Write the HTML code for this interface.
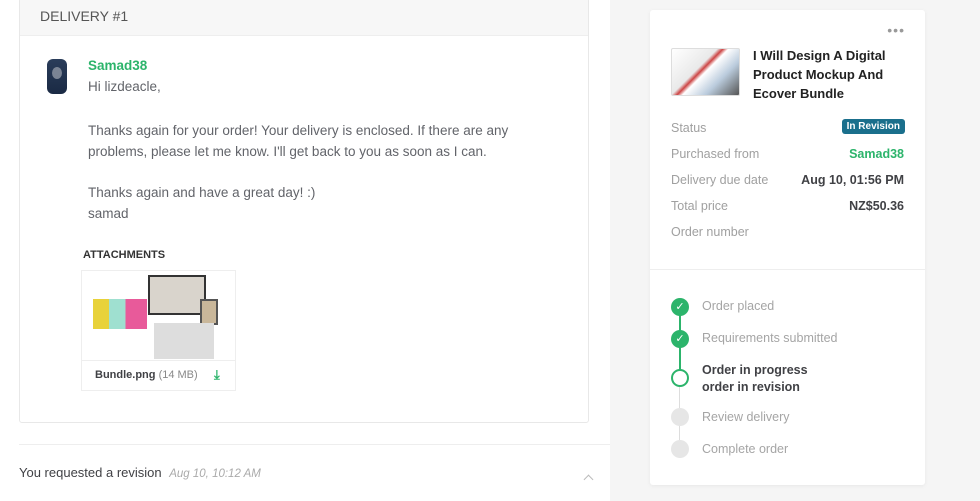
<!DOCTYPE html>
<html><head><meta charset="utf-8"><style>
*{margin:0;padding:0;box-sizing:border-box}
body{width:980px;height:501px;overflow:hidden;background:#f5f5f5;font-family:"Liberation Sans",Arial,sans-serif;position:relative}
.left{position:absolute;left:0;top:0;width:610px;height:501px;background:#fff}
.card{position:absolute;left:19px;top:-2px;width:570px;height:425px;border:1px solid #e8e8e8;border-radius:3px;background:#fff}
.hdr{height:37px;background:#f7f7f7;border-bottom:1px solid #eee;padding:9px 0 0 20px;font-size:14px;color:#555}
.t{position:absolute;font-size:13.5px;color:#62646a}
.right{position:absolute;left:650px;top:10px;width:275px;height:475px;background:#fff;border-radius:3px;box-shadow:0 1px 4px rgba(0,0,0,.06)}
.lbl{position:absolute;left:21px;font-size:12.5px;color:#a0a0a0}
.val{position:absolute;right:21px;font-size:12.5px;color:#404145;font-weight:bold}
.st{position:absolute;left:52px;font-size:12.5px;color:#a5a5a5}
.dot{position:absolute;left:21px;width:18px;height:18px;border-radius:50%}
.g{background:#1dbf73;background:#2cb46b}
.e{background:#e6e6e6}
</style></head><body>
<div class="left">
<div class="card"><div class="hdr">DELIVERY #1</div></div>
<div style="position:absolute;left:47px;top:59px;width:20px;height:35px;border-radius:6px;background:linear-gradient(#2a3d5a,#1a2a44)"><div style="margin:8px auto 0;width:10px;height:12px;border-radius:50%;background:#7a8494"></div></div>
<div class="t" style="left:88px;top:58px;color:#2cb46b;font-weight:bold">Samad38</div>
<div class="t" style="left:88px;top:79px">Hi lizdeacle,</div>
<div class="t" style="left:88px;top:120px;line-height:21px">Thanks again for your order! Your delivery is enclosed. If there are any<br>problems, please let me know. I'll get back to you as soon as I can.</div>
<div class="t" style="left:88px;top:182px;line-height:21px">Thanks again and have a great day! :)<br>samad</div>
<div class="t" style="left:83px;top:249px;font-size:11px;font-weight:bold;color:#333">ATTACHMENTS</div>
<div style="position:absolute;left:81px;top:270px;width:155px;height:121px;border:1px solid #eee">
<div style="height:90px;border-bottom:1px solid #eee;position:relative">
<div style="position:absolute;left:11px;top:28px;width:54px;height:30px;background:linear-gradient(90deg,#e8d23a 0 30%,#9fe0d0 30% 60%,#e85a9a 60%)"></div>
<div style="position:absolute;left:66px;top:4px;width:58px;height:40px;background:#d9d4cc;border:2px solid #333"></div>
<div style="position:absolute;left:118px;top:28px;width:18px;height:26px;background:#c9b79a;border:2px solid #555"></div>
<div style="position:absolute;left:72px;top:52px;width:60px;height:36px;background:#ddd"></div>
</div>
<div style="position:absolute;left:13px;top:98px;font-size:11px;color:#404145"><b>Bundle.png</b> <span style="color:#888">(14 MB)</span></div>
<div style="position:absolute;left:132px;top:96px;color:#2cb46b;font-size:13px;font-weight:bold">⤓</div>
</div>
<div style="position:absolute;left:19px;top:444px;width:591px;height:1px;background:#eee"></div>
<div class="t" style="left:19px;top:465px;font-size:13px;color:#404145">You requested a revision <i style="font-size:11.5px;color:#aaa;margin-left:4px">Aug 10, 10:12 AM</i></div>
<div style="position:absolute;left:585px;top:476px;width:7px;height:7px;border-left:1.5px solid #bbb;border-top:1.5px solid #bbb;transform:rotate(45deg)"></div>
</div>
<div class="right">
<div style="position:absolute;right:20px;top:12px;color:#999;font-size:14px;letter-spacing:1px">•••</div>
<div style="position:absolute;left:21px;top:38px;width:69px;height:48px;border:1px solid #ddd;border-radius:2px;background:linear-gradient(135deg,#fff 0,#e9e9e9 40%,#c44 45%,#fff 50%,#bcd 70%,#555 100%)"></div>
<div style="position:absolute;left:103px;top:36px;font-size:13px;font-weight:bold;color:#222;line-height:19px">I Will Design A Digital<br>Product Mockup And<br>Ecover Bundle</div>
<div class="lbl" style="top:111px">Status</div>
<div style="position:absolute;right:20px;top:109px;background:#1a6f8c;color:#fff;font-size:10px;font-weight:bold;padding:2px 5px;border-radius:3px">In Revision</div>
<div class="lbl" style="top:137px">Purchased from</div><div class="val" style="top:137px;color:#2cb46b">Samad38</div>
<div class="lbl" style="top:163px">Delivery due date</div><div class="val" style="top:163px">Aug 10, 01:56 PM</div>
<div class="lbl" style="top:189px">Total price</div><div class="val" style="top:189px">NZ$50.36</div>
<div class="lbl" style="top:215px">Order number</div>
<div style="position:absolute;left:0;top:259px;width:275px;height:1px;background:#eee"></div>
<div style="position:absolute;left:29px;top:296px;width:2px;height:70px;background:#2cb46b"></div>
<div style="position:absolute;left:29px;top:376px;width:1px;height:65px;background:#ddd"></div>
<div class="dot g" style="top:288px;color:#fff;font-size:11px;text-align:center;line-height:18px">✓</div>
<div class="dot g" style="top:320px;color:#fff;font-size:11px;text-align:center;line-height:18px">✓</div>
<div class="dot" style="top:359px;background:#fff;border:2px solid #2cb46b"></div>
<div class="dot e" style="top:398px"></div>
<div class="dot e" style="top:430px"></div>
<div class="st" style="top:289px">Order placed</div>
<div class="st" style="top:321px">Requirements submitted</div>
<div class="st" style="top:352px;color:#404145;font-weight:bold;line-height:17px">Order in progress<br>order in revision</div>
<div class="st" style="top:400px">Review delivery</div>
<div class="st" style="top:432px">Complete order</div>
</div>
</body></html>
